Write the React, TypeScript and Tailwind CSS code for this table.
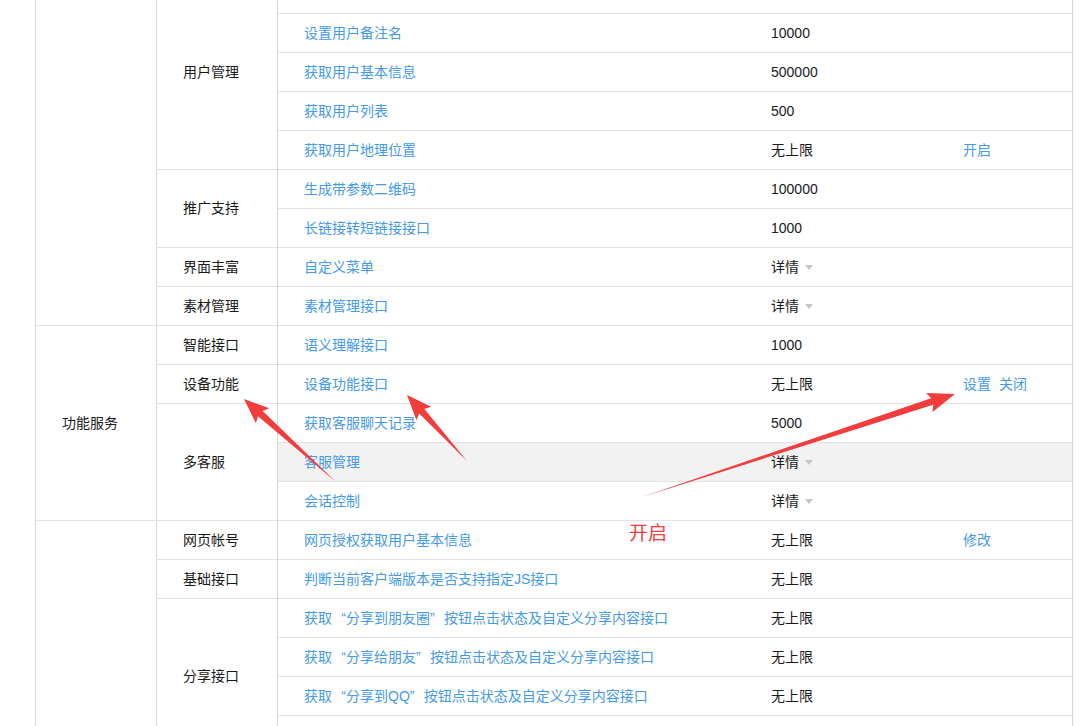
type Row = { api: string; limit: string; ops?: string[]; active?: boolean };
type Section = { name: string; rows: Row[] };
type Group = { name: string; sections: Section[] };

const groups: Group[] = [
    {
        name: '',
        sections: [
            {
                name: '用户管理',
                rows: [
                    { api: '', limit: '' },
                    { api: '设置用户备注名', limit: '10000' },
                    { api: '获取用户基本信息', limit: '500000' },
                    { api: '获取用户列表', limit: '500' },
                    { api: '获取用户地理位置', limit: '无上限', ops: ['开启'] },
                ],
            },
            {
                name: '推广支持',
                rows: [
                    { api: '生成带参数二维码', limit: '100000' },
                    { api: '长链接转短链接接口', limit: '1000' },
                ],
            },
            { name: '界面丰富', rows: [{ api: '自定义菜单', limit: '详情' }] },
            { name: '素材管理', rows: [{ api: '素材管理接口', limit: '详情' }] },
        ],
    },
    {
        name: '功能服务',
        sections: [
            { name: '智能接口', rows: [{ api: '语义理解接口', limit: '1000' }] },
            { name: '设备功能', rows: [{ api: '设备功能接口', limit: '无上限', ops: ['设置', '关闭'] }] },
            {
                name: '多客服',
                rows: [
                    { api: '获取客服聊天记录', limit: '5000' },
                    { api: '客服管理', limit: '详情', active: true },
                    { api: '会话控制', limit: '详情' },
                ],
            },
        ],
    },
    {
        name: '',
        sections: [
            { name: '网页帐号', rows: [{ api: '网页授权获取用户基本信息', limit: '无上限', ops: ['修改'] }] },
            { name: '基础接口', rows: [{ api: '判断当前客户端版本是否支持指定JS接口', limit: '无上限' }] },
            {
                name: '分享接口',
                rows: [
                    { api: '获取“分享到朋友圈”按钮点击状态及自定义分享内容接口', limit: '无上限' },
                    { api: '获取“分享给朋友”按钮点击状态及自定义分享内容接口', limit: '无上限' },
                    { api: '获取“分享到QQ”按钮点击状态及自定义分享内容接口', limit: '无上限' },
                    { api: '', limit: '' },
                ],
            },
        ],
    },
];

// red arrow drawn on top of the screenshot
function arrow(t: [number, number], p: [number, number], L = 22, W = 10, w = 3.5) {
    const dx = p[0] - t[0];
    const dy = p[1] - t[1];
    const len = Math.hypot(dx, dy);
    const ux = dx / len, uy = dy / len;
    const nx = -uy, ny = ux;
    const bx = p[0] - ux * L, by = p[1] - uy * L;
    const wx = p[0] - ux * (L + 3), wy = p[1] - uy * (L + 3);
    const pts = [
        t,
        [bx + nx * w, by + ny * w],
        [wx + nx * W, wy + ny * W],
        p,
        [wx - nx * W, wy - ny * W],
        [bx - nx * w, by - ny * w],
    ];
    return pts.map(([x, y]) => `${x.toFixed(1)},${y.toFixed(1)}`).join(' ');
}

// full width quotes like the original page font
function ApiText({ text }: { text: string }) {
    const parts = text.split(/([“”])/);
    return (
        <>
            {parts.map((p, i) =>
                p === '“' ? (
                    <span key={i} className="inline-block w-[14px] text-right">“</span>
                ) : p === '”' ? (
                    <span key={i} className="inline-block w-[14px] text-left">”</span>
                ) : (
                    <span key={i}>{p}</span>
                )
            )}
        </>
    );
}

function LimitCell({ limit }: { limit: string }) {
    if (limit === '详情') {
        return (
            <span className="flex items-center gap-[6px]">
                详情
                <span className="w-0 h-0 border-l-[4px] border-r-[4px] border-t-[5px] border-l-transparent border-r-transparent border-t-[#c6c6c6] mt-[1px]"></span>
            </span>
        );
    }
    return <span>{limit}</span>;
}

export default function App() {
    return (
        <div className="relative w-[1088px] h-[726px] overflow-hidden bg-white text-[14px] text-[#1a1a1a] font-['Liberation_Sans','Noto_Sans_CJK_SC',sans-serif]">
            <div className="pl-[35px] mt-[-25px]">
                {groups.map((g, gi) => (
                    <div key={gi} className="flex">
                        {/* first level */}
                        <div className="w-[121px] shrink-0 border-l border-b border-l-[#d6d6d6] border-b-[#e3e3e3] flex items-center pl-[26px]">
                            {g.name}
                        </div>
                        <div className="flex flex-col">
                            {g.sections.map((s) => (
                                <div key={s.name} className="flex">
                                    {/* second level */}
                                    <div className="w-[121px] shrink-0 border-l border-b border-l-[#d6d6d6] border-b-[#e3e3e3] flex items-center pl-[26px]">
                                        {s.name}
                                    </div>
                                    <div className="w-[796px] flex flex-col border-l border-r border-[#d6d6d6]">
                                        {s.rows.map((r, ri) => (
                                            <div
                                                key={ri}
                                                className={
                                                    'h-[39px] flex items-center border-b border-[#e3e3e3] ' +
                                                    (r.active ? 'bg-[#f2f2f2]' : '')
                                                }
                                            >
                                                <div className="w-[466px] shrink-0 pl-[26px] text-[#459ae9] whitespace-nowrap">
                                                    <ApiText text={r.api} />
                                                </div>
                                                <div className="w-[192px] shrink-0 pl-[27px]">
                                                    <LimitCell limit={r.limit} />
                                                </div>
                                                <div className="pl-[27px] flex gap-2 text-[#459ae9]">
                                                    {r.ops?.map((o) => (
                                                        <span key={o}>{o}</span>
                                                    ))}
                                                </div>
                                            </div>
                                        ))}
                                    </div>
                                </div>
                            ))}
                        </div>
                    </div>
                ))}
            </div>

            {/* annotations */}
            <svg className="absolute inset-0 pointer-events-none" width="1088" height="726" viewBox="0 0 1088 726">
                <polygon points={arrow([336, 482], [244, 399])} fill="#f33c3c" />
                <polygon points={arrow([467, 461], [407, 395])} fill="#f33c3c" />
                <polygon points={arrow([642, 497], [955, 394], 24, 10, 3.5)} fill="#f33c3c" />
            </svg>
            <div className="absolute left-[629px] top-[522px] text-[19px] leading-none text-[#f33c3c] font-['Noto_Sans_CJK_SC',sans-serif]">
                开启
            </div>
        </div>
    );
}
